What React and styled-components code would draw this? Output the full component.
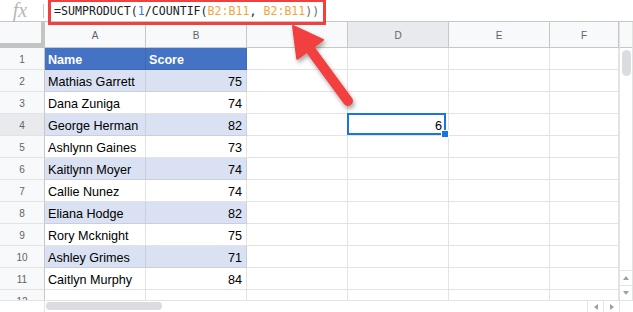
import React from 'react';
import styled, { createGlobalStyle, css } from 'styled-components';

const GlobalStyle = createGlobalStyle`
  html, body {
    margin: 0;
    padding: 0;
    background: #fff;
  }
`;

const Page = styled.div`
  position: relative;
  width: 633px;
  height: 312px;
  overflow: hidden;
  display: flex;
  flex-direction: column;
  font-family: 'Liberation Sans', Arial, sans-serif;
  background: #fff;
`;

const FormulaBar = styled.div`
  height: 22px;
  flex: none;
  display: flex;
  align-items: center;
  border-bottom: 1px solid #c7c7c7;
  box-sizing: border-box;
`;

const FxBox = styled.div`
  width: 43px;
  height: 21px;
  flex: none;
  display: flex;
  align-items: center;
  justify-content: center;
  font-family: 'Liberation Serif', 'Times New Roman', serif;
  font-style: italic;
  font-size: 20px;
  line-height: 21px;
  color: #b7b7b7;
  padding-right: 3px;
  box-sizing: border-box;
`;

const Divider = styled.div`
  width: 1px;
  height: 14px;
  flex: none;
  background: #c7c7c7;
`;

const FormulaText = styled.div`
  margin-left: 10px;
  font-family: 'DejaVu Sans Mono', 'Liberation Mono', monospace;
  font-size: 11.6px;
  color: #202124;
  white-space: pre;
  padding-top: 1px;
`;

const Tok = styled.span`
  color: ${p => p.$c};
`;

const Body = styled.div`
  flex: 1;
  display: flex;
  min-height: 0;
`;

const Sheet = styled.div`
  flex: 1;
  display: grid;
  grid-template-columns: 45px repeat(5, 101px) 69px;
  grid-template-rows: 26px;
  grid-auto-rows: 22px;
  overflow: hidden;
`;

const Corner = styled.div`
  background: #f8f9fa;
  box-sizing: border-box;
  border-right: 4px solid #c4c4c4;
  border-bottom: 5px solid #c4c4c4;
`;

const ColHead = styled.div`
  box-sizing: border-box;
  background: ${p => (p.$active ? '#e8eaed' : '#f8f9fa')};
  border-right: 1px solid #c7c7c7;
  border-bottom: 1px solid #c7c7c7;
  display: flex;
  align-items: center;
  justify-content: center;
  font-size: 10px;
  color: #5f6368;
  padding-top: 1px;
`;

const RowHead = styled.div`
  box-sizing: border-box;
  background: ${p => (p.$active ? '#e8eaed' : '#f8f9fa')};
  border-right: 1px solid #c7c7c7;
  border-bottom: 1px solid #e2e3e3;
  display: flex;
  align-items: center;
  justify-content: center;
  font-size: 10px;
  color: #5f6368;
  padding-top: 1px;
`;

const toneStyles = {
  head: css`
    background: #4472c4;
    color: #fff;
    font-weight: bold;
    border-right-color: #3f68b5;
    border-bottom-color: #3f68b5;
  `,
  band: css`
    background: #d9e1f2;
    border-right-color: #c9cfdc;
    border-bottom-color: #c9cfdc;
  `,
  plain: css`
    background: #fff;
  `,
};

const Cell = styled.div`
  position: relative;
  box-sizing: border-box;
  border-right: 1px solid #e2e3e3;
  border-bottom: 1px solid #e2e3e3;
  display: flex;
  align-items: center;
  justify-content: ${p => (p.$right ? 'flex-end' : 'flex-start')};
  padding: 3px 4px 0 3px;
  font-size: 12.6px;
  color: #000;
  white-space: nowrap;
  overflow: visible;
  ${p => toneStyles[p.$tone || 'plain']}
  ${p =>
    p.$selected &&
    css`
      padding-right: 6px;
      &::after {
        content: '';
        position: absolute;
        top: -1px;
        left: -1px;
        right: 2px;
        bottom: 0;
        border: 2px solid #1a73e8;
      }
      &::before {
        content: '';
        position: absolute;
        right: -1px;
        bottom: -3px;
        width: 6px;
        height: 6px;
        background: #1a73e8;
        border: 1px solid #fff;
        z-index: 1;
      }
    `}
`;

const VScroll = styled.div`
  width: 14px;
  flex: none;
  display: flex;
  flex-direction: column;
  border-left: 1px solid #e2e3e3;
  border-right: 1px solid #e2e3e3;
  box-sizing: border-box;
`;

const VScrollHead = styled.div`
  height: 26px;
  flex: none;
  background: #f8f9fa;
  border-bottom: 1px solid #c7c7c7;
  box-sizing: border-box;
`;

const VTrack = styled.div`
  flex: 1;
  padding: 2px 1px;
`;

const VThumb = styled.div`
  width: 9px;
  height: 26px;
  margin-left: 1px;
  border-radius: 5px;
  background: #dadce0;
`;

const ArrowBtn = styled.div`
  height: 15px;
  flex: none;
  border-top: 1px solid #e2e3e3;
  box-sizing: border-box;
  display: flex;
  align-items: center;
  justify-content: center;
`;

const HScroll = styled.div`
  height: 12px;
  flex: none;
  display: flex;
  border-top: 1px solid #e2e3e3;
  box-sizing: border-box;
`;

const HLead = styled.div`
  width: 45px;
  flex: none;
  border-right: 1px solid #e2e3e3;
  box-sizing: border-box;
`;

const HTrack = styled.div`
  flex: 1;
  padding: 1px 0 0 1px;
`;

const HThumb = styled.div`
  width: 116px;
  height: 8px;
  border-radius: 4px;
  background: #dadce0;
`;

const HBtn = styled.div`
  width: 16px;
  flex: none;
  border-left: 1px solid #e2e3e3;
  box-sizing: border-box;
  display: flex;
  align-items: center;
  justify-content: center;
`;

const HEnd = styled.div`
  width: 14px;
  flex: none;
  border-left: 1px solid #e2e3e3;
  box-sizing: border-box;
`;

const Tri = styled.div`
  width: 0;
  height: 0;
  ${p =>
    p.$dir === 'up' &&
    css`
      border-left: 3px solid transparent;
      border-right: 3px solid transparent;
      border-bottom: 4px solid #9aa0a6;
    `}
  ${p =>
    p.$dir === 'down' &&
    css`
      border-left: 3px solid transparent;
      border-right: 3px solid transparent;
      border-top: 4px solid #9aa0a6;
    `}
  ${p =>
    p.$dir === 'left' &&
    css`
      border-top: 3px solid transparent;
      border-bottom: 3px solid transparent;
      border-right: 4px solid #9aa0a6;
    `}
  ${p =>
    p.$dir === 'right' &&
    css`
      border-top: 3px solid transparent;
      border-bottom: 3px solid transparent;
      border-left: 4px solid #9aa0a6;
    `}
`;

const HighlightBox = styled.div`
  position: absolute;
  left: 48px;
  top: -1px;
  width: 278px;
  height: 26px;
  border: 3px solid #f2403f;
  box-sizing: border-box;
  pointer-events: none;
`;

const ArrowSvg = styled.svg`
  position: absolute;
  left: 0;
  top: 0;
  pointer-events: none;
`;

const COLS = ['A', 'B', 'C', 'D', 'E', 'F'];

const rows = [
  ['Mathias Garrett', 75],
  ['Dana Zuniga', 74],
  ['George Herman', 82],
  ['Ashlynn Gaines', 73],
  ['Kaitlynn Moyer', 74],
  ['Callie Nunez', 74],
  ['Eliana Hodge', 82],
  ['Rory Mcknight', 75],
  ['Ashley Grimes', 71],
  ['Caitlyn Murphy', 84],
];

function Formula() {
  const orange = '#f4a43d';
  const blue = '#3c78d8';
  return (
    <FormulaText>
      =SUMPRODUCT(<Tok $c={blue}>1</Tok>/COUNTIF(<Tok $c={orange}>B2:B11</Tok>,{' '}
      <Tok $c={orange}>B2:B11</Tok>
      <Tok $c="#6b6b6b">))</Tok>
    </FormulaText>
  );
}

function Arrow() {
  // tip near the formula box, tail by the result cell
  const tip = [293, 26];
  const tail = [348, 101];
  const dx = tail[0] - tip[0];
  const dy = tail[1] - tip[1];
  const len = Math.hypot(dx, dy);
  const u = [dx / len, dy / len];
  const n = [-u[1], u[0]];
  const headLen = 29;
  const half = 16;
  const base = [tip[0] + u[0] * headLen, tip[1] + u[1] * headLen];
  const a = [base[0] + n[0] * half, base[1] + n[1] * half];
  const b = [base[0] - n[0] * half, base[1] - n[1] * half];
  const neck = [tip[0] + u[0] * (headLen - 2), tip[1] + u[1] * (headLen - 2)];
  return (
    <ArrowSvg width="633" height="312">
      <defs>
        <filter id="arrowShadow" x="-20%" y="-20%" width="140%" height="140%">
          <feDropShadow dx="1.5" dy="3" stdDeviation="2" floodColor="#000" floodOpacity="0.35" />
        </filter>
      </defs>
      <g filter="url(#arrowShadow)" fill="#f2403f" stroke="#f2403f">
        <line
          x1={neck[0]}
          y1={neck[1]}
          x2={tail[0]}
          y2={tail[1]}
          strokeWidth="10"
          strokeLinecap="round"
        />
        <polygon
          points={`${tip[0]},${tip[1]} ${a[0]},${a[1]} ${b[0]},${b[1]}`}
          strokeWidth="2"
          strokeLinejoin="round"
        />
      </g>
    </ArrowSvg>
  );
}

export default function App() {
  return (
    <>
      <GlobalStyle />
      <Page>
        <FormulaBar>
          <FxBox>fx</FxBox>
          <Divider />
          <Formula />
        </FormulaBar>
        <Body>
          <Sheet>
            <Corner />
            {COLS.map(c => (
              <ColHead key={c} $active={c === 'D'}>
                {c}
              </ColHead>
            ))}

            <RowHead>1</RowHead>
            <Cell $tone="head">Name</Cell>
            <Cell $tone="head">Score</Cell>
            <Cell />
            <Cell />
            <Cell />
            <Cell />

            {rows.map(([name, score], i) => {
              const r = i + 2;
              const tone = r % 2 === 0 ? 'band' : 'plain';
              return (
                <React.Fragment key={r}>
                  <RowHead $active={r === 4}>{r}</RowHead>
                  <Cell $tone={tone}>{name}</Cell>
                  <Cell $tone={tone} $right>
                    {score}
                  </Cell>
                  <Cell />
                  {r === 4 ? (
                    <Cell $right $selected>
                      6
                    </Cell>
                  ) : (
                    <Cell />
                  )}
                  <Cell />
                  <Cell />
                </React.Fragment>
              );
            })}

            <RowHead>12</RowHead>
            <Cell />
            <Cell />
            <Cell />
            <Cell />
            <Cell />
            <Cell />
          </Sheet>
          <VScroll>
            <VScrollHead />
            <VTrack>
              <VThumb />
            </VTrack>
            <ArrowBtn>
              <Tri $dir="up" />
            </ArrowBtn>
            <ArrowBtn>
              <Tri $dir="down" />
            </ArrowBtn>
          </VScroll>
        </Body>
        <HScroll>
          <HLead />
          <HTrack>
            <HThumb />
          </HTrack>
          <HBtn>
            <Tri $dir="left" />
          </HBtn>
          <HBtn>
            <Tri $dir="right" />
          </HBtn>
          <HEnd />
        </HScroll>
        <HighlightBox />
        <Arrow />
      </Page>
    </>
  );
}
